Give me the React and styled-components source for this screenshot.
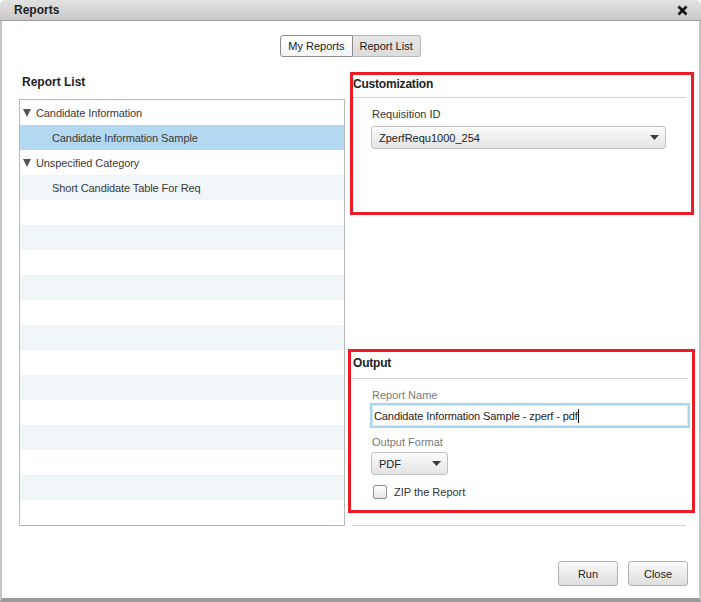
import React from 'react';
import styled, { createGlobalStyle } from 'styled-components';

const GlobalStyle = createGlobalStyle`
    html, body {
        margin: 0;
        padding: 0;
        background: #ffffff;
    }
    body {
        font-family: "Liberation Sans", Arial, sans-serif;
        font-size: 11px;
        color: #333333;
    }
`;

const rows = [
    { label: 'Candidate Information', group: true },
    { label: 'Candidate Information Sample', selected: true },
    { label: 'Unspecified Category', group: true },
    { label: 'Short Candidate Table For Req' },
    ...Array.from({ length: 13 }, () => ({ label: '' })),
];

const Caret = () => (
    <svg width="8" height="8" viewBox="0 0 8 8">
        <path d="M0 0 L8 0 L4 8 Z" fill="#555" />
    </svg>
);

const SelectArrow = () => (
    <svg width="9" height="5" viewBox="0 0 9 5">
        <path d="M0 0 L9 0 L4.5 5 Z" fill="#3a3a3a" />
    </svg>
);

export default function App() {
    return (
        <>
            <GlobalStyle />
            <Dialog>
                <TitleBar>
                    <Title>Reports</Title>
                    <CloseIcon width="11" height="11" viewBox="0 0 11 11">
                        <path d="M1.5 1.5 L9.5 9.5 M9.5 1.5 L1.5 9.5" stroke="#111" strokeWidth="2.6" />
                    </CloseIcon>
                </TitleBar>
                <Body>
                    <Toolbar>
                        <ToggleGroup>
                            <ToggleButton $first>My Reports</ToggleButton>
                            <ToggleButton $active>Report List</ToggleButton>
                        </ToggleGroup>
                    </Toolbar>
                    <Main>
                        <LeftColumn>
                            <ColumnHeading>Report List</ColumnHeading>
                            <ListBox>
                                {rows.map((row, i) => (
                                    <Row key={i} $selected={row.selected} $stripe={i % 2 === 1} $group={row.group}>
                                        {row.group && <Caret />}
                                        {row.label}
                                    </Row>
                                ))}
                            </ListBox>
                        </LeftColumn>
                        <RightColumn>
                            <CustomSection>
                                <SectionHeading>Customization</SectionHeading>
                                <FieldLabel>Requisition ID</FieldLabel>
                                <Select $width={295}>
                                    ZperfRequ1000_254
                                    <SelectArrow />
                                </Select>
                            </CustomSection>
                            <OutputSection>
                                <SectionHeading>Output</SectionHeading>
                                <FieldLabel $muted>Report Name</FieldLabel>
                                <TextField>
                                    Candidate Information Sample - zperf - pdf
                                    <TextCaret />
                                </TextField>
                                <FieldLabel $muted $gap={7}>Output Format</FieldLabel>
                                <Select $width={77} $gap={3}>
                                    PDF
                                    <SelectArrow />
                                </Select>
                                <CheckRow>
                                    <CheckBox />
                                    ZIP the Report
                                </CheckRow>
                            </OutputSection>
                            <Divider />
                        </RightColumn>
                    </Main>
                    <Footer>
                        <Button>Run</Button>
                        <Button>Close</Button>
                    </Footer>
                </Body>
            </Dialog>
        </>
    );
}

const Dialog = styled.div`
    width: 701px;
    height: 602px;
    display: flex;
    flex-direction: column;
    box-sizing: border-box;
`;

const TitleBar = styled.div`
    height: 21px;
    box-sizing: border-box;
    display: flex;
    align-items: center;
    justify-content: space-between;
    padding: 0 13px 0 14px;
    background: linear-gradient(#e2e2e2, #c9c9c9);
    border-bottom: 1px solid #9c9c9c;
    border-radius: 5px 5px 0 0;
`;

const Title = styled.span`
    font-size: 12px;
    font-weight: bold;
    color: #222;
`;

const CloseIcon = styled.svg`
    display: block;
`;

const Body = styled.div`
    flex: 1;
    display: flex;
    flex-direction: column;
    border-left: 2px solid #c4c4c4;
    border-right: 2px solid #c4c4c4;
    border-bottom: 4px solid #9b9b9b;
    background: #ffffff;
`;

const Toolbar = styled.div`
    display: flex;
    justify-content: center;
    padding-top: 14px;
`;

const ToggleGroup = styled.div`
    display: flex;
`;

const ToggleButton = styled.div`
    height: 22px;
    box-sizing: border-box;
    padding: 0 7px;
    display: flex;
    align-items: center;
    font-size: 11px;
    color: #222;
    border: 1px solid ${(p) => (p.$active ? '#b8b8b8' : '#8c8c8c')};
    border-left-width: ${(p) => (p.$first ? '1px' : '0')};
    border-radius: ${(p) => (p.$first ? '3px 0 0 3px' : '0 3px 3px 0')};
    background: ${(p) => (p.$active ? 'linear-gradient(#e6e6e6, #dcdcdc)' : 'linear-gradient(#ffffff, #f4f4f4)')};
`;

const Main = styled.div`
    display: flex;
    padding-left: 17px;
    margin-top: 15px;
`;

const LeftColumn = styled.div`
    width: 326px;
    display: flex;
    flex-direction: column;
`;

const ColumnHeading = styled.div`
    font-size: 12px;
    font-weight: bold;
    color: #222;
    line-height: 20px;
    padding-left: 3px;
    margin-bottom: 7px;
`;

const ListBox = styled.div`
    border: 1px solid #b9b9b9;
    display: flex;
    flex-direction: column;
`;

const Row = styled.div`
    height: 25px;
    display: flex;
    align-items: center;
    gap: 5px;
    padding-left: ${(p) => (p.$group ? '3px' : '32px')};
    font-size: 11px;
    letter-spacing: -0.1px;
    color: #3a3a3a;
    background: ${(p) => (p.$selected ? '#b3d8f1' : p.$stripe ? '#f0f5f8' : '#ffffff')};

    svg {
        display: block;
    }
`;

const RightColumn = styled.div`
    width: 347px;
    margin-left: 3px;
    display: flex;
    flex-direction: column;
`;

const CustomSection = styled.div`
    margin-left: 2px;
    width: 344px;
    height: 143px;
    box-sizing: border-box;
    border: 3px solid #ed1c24;
`;

const OutputSection = styled.div`
    margin-top: 134px;
    width: 347px;
    height: 164px;
    box-sizing: border-box;
    border: 3px solid #ed1c24;
    padding-left: 2px;
`;

const SectionHeading = styled.div`
    height: 23px;
    box-sizing: border-box;
    padding-top: 1px;
    line-height: 16px;
    margin-right: 5px;
    font-size: 12px;
    font-weight: bold;
    letter-spacing: -0.2px;
    color: #222;
    border-bottom: 1px solid #cfd3d6;

    ${OutputSection} & {
        height: 27px;
        padding-top: 3px;
    }
`;

const FieldLabel = styled.div`
    margin-top: ${(p) => (p.$gap ?? 9)}px;
    margin-left: 19px;
    line-height: 14px;
    font-size: 11px;
    color: ${(p) => (p.$muted ? '#7a7a7a' : '#333')};
`;

const Select = styled.div`
    margin-top: ${(p) => (p.$gap ?? 5)}px;
    margin-left: 18px;
    width: ${(p) => p.$width}px;
    height: 23px;
    box-sizing: border-box;
    display: flex;
    align-items: center;
    justify-content: space-between;
    padding: 0 6px 0 7px;
    font-size: 11px;
    color: #222;
    border: 1px solid #c2c2c2;
    border-radius: 3px;
    background: linear-gradient(#fbfbfb, #e4e4e4);

    svg {
        display: block;
    }
`;

const TextField = styled.div`
    margin-top: 1px;
    margin-left: 17px;
    width: 320px;
    height: 25px;
    box-sizing: border-box;
    display: flex;
    align-items: center;
    padding-left: 2px;
    font-size: 11px;
    letter-spacing: -0.1px;
    color: #222;
    border: 2px solid #a9d3ef;
    box-shadow: inset 0 0 0 1px #d6e9f6;
    background: #fff;
`;

const TextCaret = styled.span`
    display: inline-block;
    width: 1px;
    height: 14px;
    background: #111;
`;

const CheckRow = styled.div`
    margin-top: 10px;
    margin-left: 20px;
    display: flex;
    align-items: center;
    gap: 7px;
    font-size: 11px;
    color: #333;
`;

const CheckBox = styled.span`
    width: 14px;
    height: 14px;
    box-sizing: border-box;
    border: 1px solid #8f8f8f;
    border-radius: 2px;
    background: linear-gradient(#ffffff, #e6e6e6);
`;

const Divider = styled.div`
    margin-top: 12px;
    margin-left: 4px;
    width: 334px;
    height: 1px;
    background: #cfd3d6;
`;

const Footer = styled.div`
    margin-top: auto;
    display: flex;
    justify-content: flex-end;
    gap: 10px;
    padding: 0 11px 12px 0;
`;

const Button = styled.div`
    width: 60px;
    height: 25px;
    box-sizing: border-box;
    display: flex;
    align-items: center;
    justify-content: center;
    font-size: 11px;
    color: #222;
    border: 1px solid #b0b0b0;
    border-radius: 3px;
    background: linear-gradient(#fafafa, #dedede);
`;
